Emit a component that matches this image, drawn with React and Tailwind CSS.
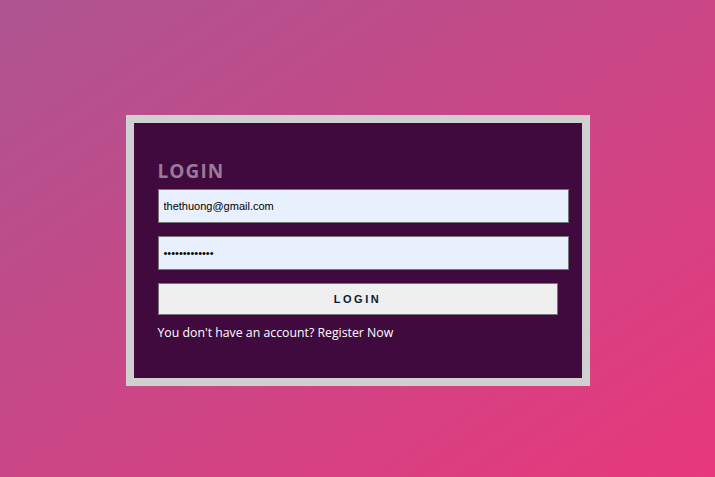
export default function App() {
  return (
    <div className="min-h-[477px] w-full bg-[linear-gradient(to_bottom_right,#ad5591,#e7387b)] flex justify-center pt-[115px]">
      <div className="w-[464px] h-[271px] border-[8px] border-[#d0d0d0] bg-[#400a3e] pl-[24px] pt-[35px]">
        <h2 className="font-['Open_Sans',sans-serif] font-bold text-[19px] leading-[26px] tracking-[1.1px] text-[#9b7999]">LOGIN</h2>
        <form className="mt-[5px] flex flex-col">
          <input
            type="email"
            defaultValue="thethuong@gmail.com"
            className="w-[411px] h-[34px] border border-[#767676] bg-[#e8f0fe] pl-[5px] pr-[4px] font-['Liberation_Sans',Arial,sans-serif] text-[11px] text-black outline-none"
          />
          <input
            type="password"
            defaultValue="thethuongabc1"
            className="mt-[13px] w-[411px] h-[34px] border border-[#767676] bg-[#e8f0fe] pl-[5px] pr-[4px] font-['Liberation_Sans',Arial,sans-serif] text-[11px] text-black outline-none"
          />
          <button
            type="button"
            className="mt-[13px] w-[400px] h-[32px] border border-[#767676] bg-[#efefef] font-['Liberation_Sans',Arial,sans-serif] font-bold text-[11px] tracking-[2.5px] text-[#0d1a33]"
          >
            LOGIN
          </button>
        </form>
        <p className="mt-[9px] font-['Open_Sans',sans-serif] text-[12.3px] text-white">
          You don't have an account? <a className="text-white">Register Now</a>
        </p>
      </div>
    </div>
  );
}
